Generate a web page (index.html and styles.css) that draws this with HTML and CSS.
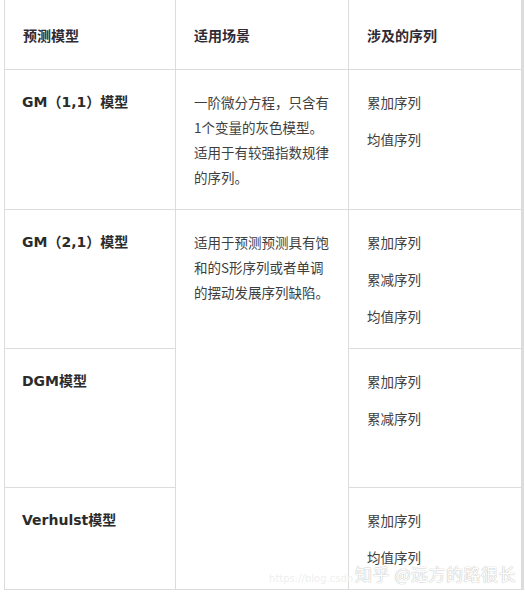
FILE: index.html
```html
<!DOCTYPE html>
<html lang="zh-CN">
<head>
<meta charset="utf-8">
<link rel="stylesheet" href="styles.css">
</head>
<body>
<div class="table">
  <div class="cell head">预测模型</div>
  <div class="cell head">适用场景</div>
  <div class="cell head">涉及的序列</div>

  <div class="cell model">GM（1,1）模型</div>
  <div class="cell desc">一阶微分方程，只含有<br>1个变量的灰色模型。<br>适用于有较强指数规律<br>的序列。</div>
  <div class="cell seq"><span>累加序列</span><span>均值序列</span></div>

  <div class="cell model">GM（2,1）模型</div>
  <div class="cell desc span3">适用于预测预测具有饱<br>和的S形序列或者单调<br>的摆动发展序列缺陷。</div>
  <div class="cell seq"><span>累加序列</span><span>累减序列</span><span>均值序列</span></div>

  <div class="cell model">DGM模型</div>
  <div class="cell seq"><span>累加序列</span><span>累减序列</span><span></span></div>

  <div class="cell model">Verhulst模型</div>
  <div class="cell seq"><span>累加序列</span><span>均值序列</span></div>

  <div class="mark">
    <span class="url">https://blog.csdn</span>
    <span class="zhihu">知乎 @远方的路很长</span>
  </div>
</div>
</body>
</html>
```

FILE: styles.css
```css
html, body {
  margin: 0;
  padding: 0;
  background: #fff;
}

body {
  padding-left: 4px;
  font-family: "DejaVu Sans", "Noto Sans CJK SC", sans-serif;
}

.table {
  position: relative;
  width: 518px;
  display: grid;
  grid-template-columns: 170px 172px 172px;
  gap: 1px;
  padding: 0 1px 1px 1px;
  background: #dcdcdc;
}

.cell {
  background: #fff;
  padding: 20px 18px 19px;
  line-height: 25px;
  font-size: 13.5px;
  color: #3e3e3e;
}

.head {
  padding-top: 24px;
  padding-bottom: 20px;
  font-size: 14px;
  font-weight: bold;
  color: #2f2a33;
}

.model {
  padding-left: 17px;
  font-size: 14px;
  font-weight: bold;
  color: #2b2b2b;
}

.desc {
  white-space: nowrap;
  font-family: "Noto Sans CJK SC", sans-serif;
}

.span3 {
  grid-row: span 3;
}

.seq {
  display: flex;
  flex-direction: column;
  gap: 12px;
  font-family: "Noto Sans CJK SC", sans-serif;
}

.seq span {
  height: 25px;
}

.mark {
  position: absolute;
  right: 8px;
  bottom: 6px;
  display: flex;
  align-items: center;
  gap: 2px;
}

.url {
  font-family: "DejaVu Sans", sans-serif;
  font-size: 10px;
  color: #efefef;
  white-space: nowrap;
  margin-top: 10px;
}

.zhihu {
  font-family: "Noto Sans CJK SC", sans-serif;
  font-size: 17px;
  line-height: 18px;
  letter-spacing: 0.5px;
  color: #fff;
  text-shadow: 0 0 1px #b4b4b4, 0 0 1px #c4c4c4;
  white-space: nowrap;
}
```
